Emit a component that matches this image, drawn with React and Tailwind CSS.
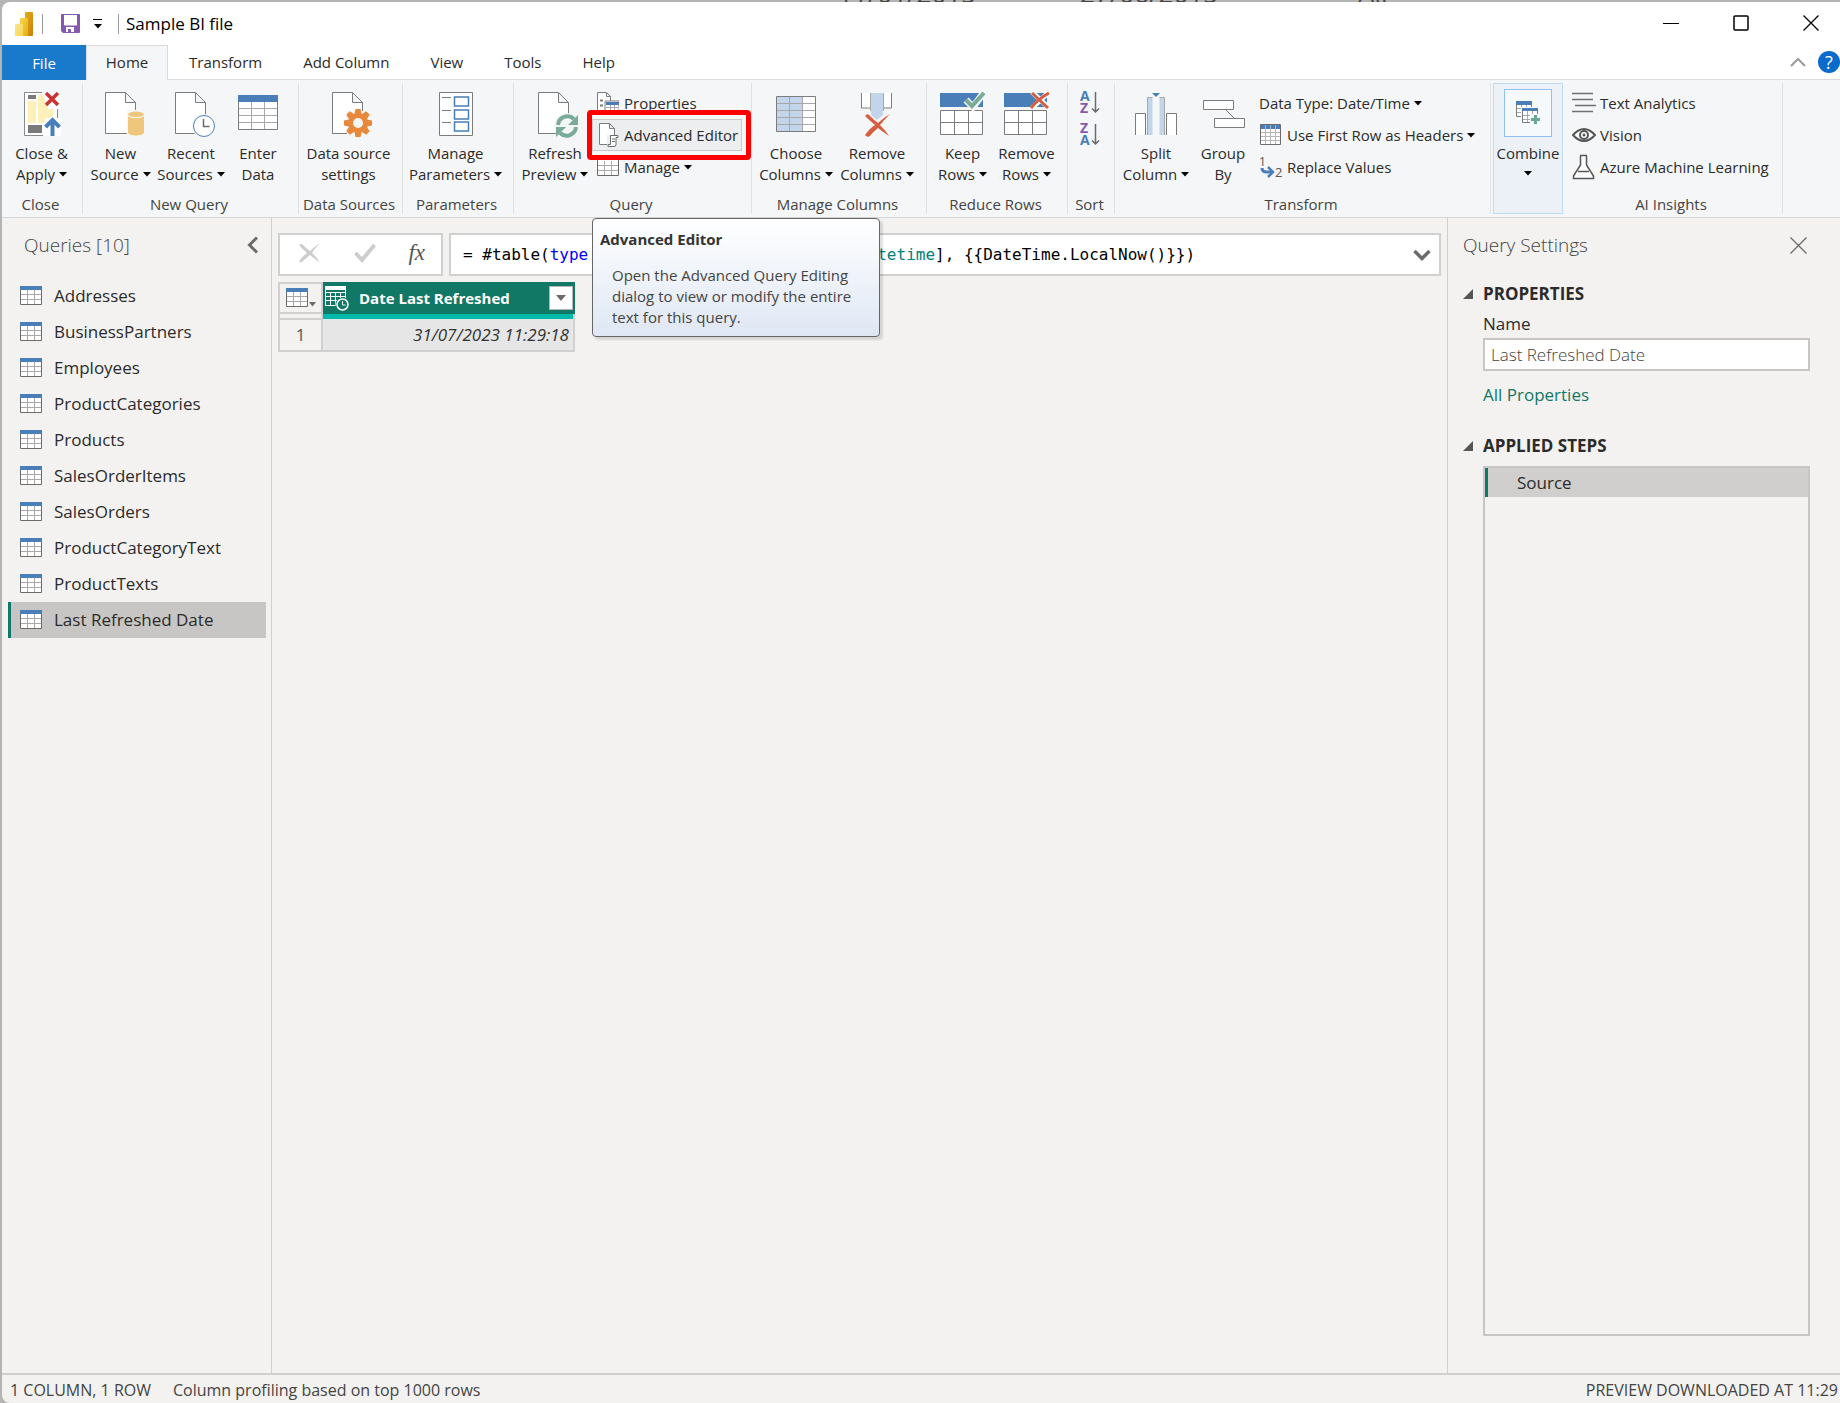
import { useState } from "react";

const queries = [
  "Addresses",
  "BusinessPartners",
  "Employees",
  "ProductCategories",
  "Products",
  "SalesOrderItems",
  "SalesOrders",
  "ProductCategoryText",
  "ProductTexts",
  "Last Refreshed Date",
];

/* ---------- Icons ---------- */

const PowerBiIcon = () => (
  <svg width="18" height="24" viewBox="0 0 18 24">
    <defs>
      <linearGradient id="pbi1" x1="0" y1="0" x2="1" y2="1">
        <stop offset="0" stopColor="#e6ad10" />
        <stop offset="1" stopColor="#c87e0e" />
      </linearGradient>
      <linearGradient id="pbi2" x1="0" y1="0" x2="1" y2="1">
        <stop offset="0" stopColor="#f6d751" />
        <stop offset="1" stopColor="#e6ad10" />
      </linearGradient>
      <linearGradient id="pbi3" x1="0" y1="0" x2="1" y2="1">
        <stop offset="0" stopColor="#f9e589" />
        <stop offset="1" stopColor="#f6d751" />
      </linearGradient>
    </defs>
    <path d="M10 1q0-1 1-1h6q1 0 1 1v22q0 1-1 1h-7z" fill="url(#pbi1)" />
    <path d="M5 7q0-1 1-1h6q1 0 1 1v17H5z" fill="url(#pbi2)" />
    <path d="M0 13q0-1 1-1h6q1 0 1 1v11H1q-1 0-1-1z" fill="url(#pbi3)" />
  </svg>
);

const SaveIcon = () => (
  <svg width="19" height="19" viewBox="0 0 19 19">
    <path d="M1 0h17q1 0 1 1v17q0 1-1 1H2l-2-2V1q0-1 1-1z" fill="#8659ab" />
    <path d="M3 1h13v9.500q0 1-1 1H4q-1 0-1-1z" fill="#fff" />
    <path d="M5 13h8v5H5z" fill="#fff" />
    <path d="M7 15h3v3H7z" fill="#8659ab" />
  </svg>
);

const Caret = ({ className = "" }) => (
  <svg width="8" height="5" viewBox="0 0 8 5" className={`inline-block shrink-0 ${className}`}>
    <path d="M0 0h8L4 4.500z" fill="#000" />
  </svg>
);

const CloseApplyIcon = () => (
  <svg width="38" height="46" viewBox="0 0 38 46">
    <path d="M1.500.5h33v43h-33z" fill="#fff" stroke="#8a8a8a" />
    <path d="M5 3h8v4H5zM5 33h14v8H5z" fill="#7a7a7a" />
    <path d="M5 9h8v22H5zM15 3h7l8 14v8H15z" fill="#fdf0b8" />
    <path d="M15 17h15v5l-7 9h-8z" fill="#fdf0b8" />
    <path d="M19 0h19v17H25zM22 26h16v18H20z" fill="#fff" />
    <path d="M23 1l12 12M35 1L23 13" stroke="#cc3333" strokeWidth="3.500" />
    <path d="M29.500 44V30M22.500 35l7-7 7 7" fill="none" stroke="#4a7ebb" strokeWidth="4" />
  </svg>
);

const Page = () => (
  <path d="M.5.500h20l10 10v31H.500zM20.500.500v10h10" fill="#fff" stroke="#7c7c7c" />
);

const NewSourceIcon = () => (
  <svg width="40" height="46" viewBox="0 0 40 46" className="ml-2">
    <Page />
    <path d="M22 18h18v27H22z" fill="#f5f6f7" />
    <path d="M23 22.500v18c0 4 16 4 16 0v-18z" fill="#eec77d" />
    <ellipse cx="31" cy="22.500" rx="8" ry="3" fill="#eec77d" />
    <path d="M23 23c0 3.500 16 3.500 16 0" fill="none" stroke="#fff" />
  </svg>
);

const RecentSourcesIcon = () => (
  <svg width="40" height="46" viewBox="0 0 40 46" className="ml-2">
    <Page />
    <circle cx="29" cy="34" r="12" fill="#f5f6f7" />
    <circle cx="29" cy="34" r="10.500" fill="#fff" stroke="#4f81bd" />
    <path d="M28.500 27v7.500h6" fill="none" stroke="#6b6b6b" strokeWidth="1.500" />
  </svg>
);

const EnterDataIcon = () => (
  <svg width="40" height="46" viewBox="0 0 40 46">
    <path d="M.5 4.500h39v33H.5z" fill="#fff" stroke="#7c7c7c" />
    <path d="M1 16.500h38M1 23.500h38M1 30.500h38M13.500 10v27M26.500 10v27" stroke="#a8a8a8" />
    <path d="M0 3h40v7H0z" fill="#4a7eb9" />
  </svg>
);

const DataSourceIcon = () => (
  <svg width="40" height="46" viewBox="0 0 40 46" className="ml-[6px]">
    <Page />
    <path d="M14 19h26v26H14z" fill="#f5f6f7" />
    <path d="M.5 39v2.500H15M30.500 10v8" fill="none" stroke="#7c7c7c" />
    <g fill="#e8883a">
      <circle cx="26" cy="31" r="10" />
      <path d="M23.500 17h5l1 5h-7zM23.500 45h5l1-5h-7zM12 28.500v5l5 1v-7zM40 28.500v5l-5 1v-7z" />
      <path d="M14.300 22.800l3.500-3.500 4.200 2.800-5 5zM34.200 19.300l3.500 3.500-2.800 4.200-5-5zM14.300 39.200l3.500 3.500 4.200-2.800-5-5zM34.200 42.700l3.500-3.500-2.800-4.200-5 5z" />
    </g>
    <circle cx="26" cy="31" r="5" fill="#f5f6f7" />
  </svg>
);

const ParametersIcon = () => (
  <svg width="36" height="46" viewBox="0 0 36 46">
    <path d="M1.500.5h33v43h-33z" fill="#fff" stroke="#7c7c7c" />
    <path d="M4 5.500h9M4 18.500h9M4 30.500h9" stroke="#7c7c7c" />
    <path d="M16.500 5h14v9h-14zM16.500 18h14v9h-14zM16.500 30h14v9h-14z" fill="#fff" stroke="#4a7eb9" strokeWidth="1.500" />
  </svg>
);

const RefreshIcon = () => (
  <svg width="42" height="46" viewBox="0 0 42 46" className="ml-2">
    <Page />
    <circle cx="29" cy="34" r="13" fill="#f5f6f7" />
    <path d="M20 33a9.500 9.500 0 0 1 16-6M38 35a9.500 9.500 0 0 1-16 6" fill="none" stroke="#79ab98" strokeWidth="4" />
    <path d="M40 23v10H30zM18 45V35h10z" fill="#79ab98" />
  </svg>
);

const ChooseColumnsIcon = () => (
  <svg width="40" height="46" viewBox="0 0 40 46">
    <path d="M.5 4.500h39v35H.5z" fill="#fff" />
    <path d="M1 5h26v34H1z" fill="#c3d5ea" />
    <path d="M1 11.500h38M1 18.500h38M1 25.500h38M1 32.500h38M13.500 5v34M26.500 5v34" stroke="#a8a8a8" />
    <path d="M.5 4.500h39v35H.5z" fill="none" stroke="#7c7c7c" />
  </svg>
);

const RedCross = () => (
  <path
    d="M0 2Q2-1 4 1Q9 6 13 9Q18 4 25 0Q19 6 15 11Q21 17 24 22Q18 18 13 14Q9 17 5 22Q2 24 0 21Q5 14 10 11Q4 6 0 2z"
    fill="#d75f41"
  />
);

const RemoveColumnsIcon = () => (
  <svg width="34" height="46" viewBox="0 0 34 46">
    <path d="M1.500 1v15h9V1M22.500 1v15h9V1" fill="#fff" stroke="#7c7c7c" />
    <path d="M11 1h12v22l-6 5-6-5z" fill="#c3d5ea" />
    <path d="M10.500 1v18M23.500 1v18" stroke="#a8a8a8" />
    <g transform="translate(5 22)">
      <RedCross />
    </g>
  </svg>
);

const RowsIcon = ({ remove }) => (
  <svg width="46" height="46" viewBox="0 0 46 46">
    <path d="M0 1h43v14H0z" fill="#4a7eb9" />
    <path d="M.5 18.500h42v24H.5zM14.500 18v24M28.500 18v24M0 30.500h43" fill="#fff" stroke="#7c7c7c" />
    {remove ? (
      <g>
        <path d="M28 0l17 16M45 0L28 16" stroke="#fff" strokeWidth="5" />
        <path d="M28 1l16 15M45 1Q34 7 27 16" fill="none" stroke="#d75f41" strokeWidth="3" />
      </g>
    ) : (
      <g>
        <path d="M26 8l7 7L45-1" fill="none" stroke="#f5f6f7" strokeWidth="7" />
        <path d="M26 8l6 6L44 1" fill="none" stroke="#79ab98" strokeWidth="4" />
      </g>
    )}
  </svg>
);

const SplitColumnIcon = () => (
  <svg width="42" height="46" viewBox="0 0 42 46">
    <path d="M.5 43V21.500h10V43M31.500 43V21.500h10V43" fill="#fff" stroke="#7c7c7c" />
    <path d="M12.500 43V5.500h5V43zM24.500 43V5.500h5V43z" fill="#c3d5ea" />
    <path d="M12.500 43V5.500h5M29.500 43V5.500h-5" fill="none" stroke="#a8a8a8" />
    <path d="M17 1h8l-4 4z" fill="#4a7eb9" />
  </svg>
);

const GroupByIcon = () => (
  <svg width="42" height="46" viewBox="0 0 42 46" className="ml-[2px]">
    <path d="M22 17l10 10" stroke="#7c7c7c" />
    <path d="M.5 8.500h30v9H.5zM11.500 26.500h30v9h-30z" fill="#fff" stroke="#7c7c7c" />
  </svg>
);

const CombineIcon = () => (
  <svg width="24" height="24" viewBox="0 0 24 24">
    <path d="M.5 1.500h15v14H.5z" fill="#fff" stroke="#7c7c7c" />
    <path d="M1 7.500h14M1 11.500h14M5.500 4v11M10.500 4v11" stroke="#a8a8a8" />
    <path d="M0 0h16v4H0z" fill="#4a7eb9" />
    <path d="M5 6h18v17H5z" fill="#f6f9fc" />
    <path d="M6.500 8.500h15v13h-15z" fill="#fff" stroke="#7c7c7c" />
    <path d="M7 14.500h14M7 18.500h8M11.500 10v11M16.500 10v6" stroke="#a8a8a8" />
    <path d="M6 7h16v3H6z" fill="#4a7eb9" />
    <path d="M14 13h10v11H14z" fill="#f6f9fc" />
    <path d="M18 14h3v3h3v3h-3v3h-3v-3h-3v-3h3z" fill="#6aa893" />
  </svg>
);

const PropertiesIcon = () => (
  <svg width="22" height="22" viewBox="0 0 22 22">
    <path d="M.5.500h9l4 4v16H.500zM9.500.500v4h4" fill="#fff" stroke="#7c7c7c" />
    <path d="M3 8.500h3M3 13.500h3" stroke="#7c7c7c" strokeWidth="2" />
    <path d="M8 9h14v13H8z" fill="#fff" stroke="#7c7c7c" />
    <path d="M9 15.500h12M13.500 12v8M17.500 12v8" stroke="#a8a8a8" />
    <path d="M9 10h13v3H9z" fill="#4a7eb9" />
  </svg>
);

const AdvancedEditorIcon = () => (
  <svg width="22" height="24" viewBox="0 0 22 24">
    <path d="M2.500.500h10l5 5v16h-15zM12.500.500v5h5" fill="#fff" stroke="#7c7c7c" />
    <path d="M10 12h12v12H10z" fill="#edeeef" />
    <path d="M13.500 12.500h7.500v2h-2v7q0 2-2 2h-6v-2h2.500z" fill="#fff" stroke="#6b6b6b" />
    <path d="M15 16h3M15 18.500h3" stroke="#6b6b6b" />
  </svg>
);

const TableIcon = ({ header }) => (
  <svg width="22" height="20" viewBox="0 0 22 20" className="shrink-0">
    <path d="M.5.500h21v18H.500z" fill="#fff" />
    <path d="M1 8.500h20M1 13.500h20M7.500 4v14M14.500 4v14" stroke="#a8a8a8" />
    <path d="M.5.500h21v18H.500z" fill="none" stroke="#6b6b6b" />
    {header && <path d="M0 0h22v4H0z" fill="#4a7eb9" />}
  </svg>
);

const FirstRowIcon = () => (
  <svg width="22" height="22" viewBox="0 0 22 22">
    <path d="M.5.500h20v20H.500z" fill="#fff" />
    <path d="M1 1h19v4H1z" fill="#4a7eb9" />
    <path d="M1 8.500h20M1 12.500h20M1 16.500h20M5.500 1v20M10.500 1v20M15.500 1v20" stroke="#b5b5b5" />
    <path d="M.5.500h20v20H.500z" fill="none" stroke="#6b6b6b" />
  </svg>
);

const ReplaceIcon = () => (
  <svg width="24" height="22" viewBox="0 0 24 22" overflow="visible">
    <text x="0" y="10" fontSize="12" fill="#555">1</text>
    <text x="16" y="21" fontSize="13" fill="#555">2</text>
    <path d="M3 12q0 4 5 4h4" fill="none" stroke="#4a7eb9" strokeWidth="3" />
    <path d="M9 11l5 5-5 5" fill="none" stroke="#4a7eb9" strokeWidth="2.500" />
  </svg>
);

const SortIcon = ({ first, second, a, b }) => (
  <svg width="20" height="24" viewBox="0 0 20 24" overflow="visible">
    <text x="0" y="10" fontSize="14" fontWeight="700" fill={a}>{first}</text>
    <text x="0" y="22" fontSize="14" fontWeight="700" fill={b}>{second}</text>
    <path d="M15.500 1v20M12 17.500l3.500 3.500 3.500-3.500" fill="none" stroke="#6b6b6b" strokeWidth="1.500" />
  </svg>
);

const TextAnalyticsIcon = () => (
  <svg width="24" height="22" viewBox="0 0 24 22">
    <path d="M0 1.500h21M0 7.500h21M3 13.500h21M0 19.500h21" stroke="#6f6f6f" strokeWidth="1.500" />
  </svg>
);

const VisionIcon = () => (
  <svg width="24" height="14" viewBox="0 0 24 14">
    <path d="M1 7Q12-5 23 7Q12 19 1 7z" fill="#fff" stroke="#555" strokeWidth="2" />
    <circle cx="12" cy="7" r="4" fill="#fff" stroke="#555" strokeWidth="2" />
    <circle cx="12" cy="7" r="1.500" fill="#555" />
  </svg>
);

const FlaskIcon = () => (
  <svg width="24" height="26" viewBox="0 0 24 26">
    <path d="M8 1.500h7M8.500 2v9L1.500 22v2.500h20V22l-7-11V2" fill="#fff" stroke="#555" strokeWidth="1.500" />
    <path d="M6 17.500h11" stroke="#555" strokeWidth="1.500" />
  </svg>
);

const DateTimeColumnIcon = () => (
  <svg width="24" height="25" viewBox="0 0 24 25" fill="none" stroke="#fff">
    <path d="M.5 1.500h20v18H.500zM.5 6.500h20M.5 10.500h20M.5 14.500h20M5.500 6v13M10.500 6v13M15.500 6v13" />
    <path d="M0 0h21v4H0z" fill="#fff" stroke="none" />
    <circle cx="17.500" cy="18.500" r="7" fill="#117865" stroke="none" />
    <circle cx="17.500" cy="18.500" r="5.500" strokeWidth="1.500" />
    <path d="M17.500 15v4h3" />
  </svg>
);

/* ---------- Ribbon parts ---------- */

const Group = ({ label, className, children }) => (
  <div className={`flex flex-col shrink-0 border-r border-[#dfe1e3] ${className}`}>
    <div className="flex h-[111px]">{children}</div>
    <div className="pr-[3px] text-center text-[15px] leading-5 text-[#444] whitespace-nowrap">{label}</div>
  </div>
);

const BigButton = ({ icon, line1, line2, caret, className }) => (
  <button className={`flex flex-col items-center shrink-0 pt-[9px] ${className}`}>
    <span className="flex h-[51px] items-start justify-center">{icon}</span>
    <span className="text-[15px] leading-[21px] whitespace-nowrap">{line1}</span>
    <span className="flex items-center gap-1 text-[15px] leading-[21px] whitespace-nowrap">
      {line2}
      {caret && <Caret />}
    </span>
  </button>
);

const SmallButton = ({ icon, label, caret, className = "" }) => (
  <button className={`flex h-8 items-center gap-1 text-[15px] leading-5 whitespace-nowrap ${className}`}>
    {icon && <span className="flex w-6 justify-center shrink-0">{icon}</span>}
    {label}
    {caret && <Caret />}
  </button>
);

/* Sliver of the report window that shows above this one */
const BackgroundWindow = () => (
  <div className="flex h-[2px] shrink-0 items-end overflow-hidden pl-[836px] text-[26px] leading-7 text-[#444]" aria-hidden="true">
    <span className="-mb-[5px] w-[242px] shrink-0">11/01/2015</span>
    <span className="-mb-[5px] w-[278px] shrink-0">27/06/2015</span>
    <span className="-mb-[5px]">All</span>
  </div>
);

const TitleBar = () => (
  <header className="flex h-[43px] items-center bg-white pl-[13px] pr-[21px] rounded-tl-lg">
    <PowerBiIcon />
    <div className="ml-[9px] h-5 w-px bg-[#9a9a9a]"></div>
    <button className="ml-[18px]" aria-label="Save">
      <SaveIcon />
    </button>
    <button className="ml-[13px] flex flex-col items-center gap-1" aria-label="Customize quick access toolbar">
      <span className="h-px w-[9px] bg-black"></span>
      <Caret />
    </button>
    <div className="ml-4 h-5 w-px bg-[#9a9a9a]"></div>
    <h1 className="ml-[7px] text-[17px] leading-6 text-black">Sample BI file</h1>
    <div className="ml-auto flex items-center gap-[54px] pb-[2px]">
      <button aria-label="Minimize">
        <svg width="16" height="16" viewBox="0 0 16 16"><path d="M0 8.500h16" stroke="#000" /></svg>
      </button>
      <button aria-label="Maximize">
        <svg width="16" height="16" viewBox="0 0 16 16"><rect x="1" y="1" width="14" height="14" rx="1" fill="none" stroke="#000" strokeWidth="1.500" /></svg>
      </button>
      <button aria-label="Close">
        <svg width="16" height="16" viewBox="0 0 16 16"><path d="M.5.500l15 15M15.500.500l-15 15" stroke="#000" strokeWidth="1.300" /></svg>
      </button>
    </div>
  </header>
);

const Tabs = () => (
  <nav className="flex h-[35px] bg-white text-[15px] leading-5">
    <button className="w-[84px] bg-[#1979ca] text-white">File</button>
    <button className="w-[82px] border border-b-0 border-[#dadbdc] bg-[#f5f6f7] pb-[2px]">Home</button>
    <div className="flex flex-1 items-center gap-[41px] border-b border-[#dadbdc] pl-[21px]">
      <button>Transform</button>
      <button>Add Column</button>
      <button>View</button>
      <button>Tools</button>
      <button>Help</button>
      <div className="ml-auto flex items-center gap-3">
        <button aria-label="Collapse ribbon">
          <svg width="16" height="10" viewBox="0 0 16 10"><path d="M1 9l7-7 7 7" fill="none" stroke="#9a9a9a" strokeWidth="2" /></svg>
        </button>
        <button className="h-[22px] w-[22px] rounded-full bg-[#0a6bcb] text-[18px] leading-[22px] text-white" aria-label="Help center">
          ?
        </button>
      </div>
    </div>
  </nav>
);

const Tooltip = () => (
  <div
    role="tooltip"
    className="absolute left-0 top-[135px] z-20 w-[288px] rounded-sm border border-[#666] bg-linear-to-b from-white to-[#dfe7f4] px-[7px] pt-[10px] pb-2 text-left shadow-[3px_3px_2px_rgba(0,0,0,0.12)]"
  >
    <p className="text-[15px] font-bold leading-5 text-[#333]">Advanced Editor</p>
    <p className="mt-4 pl-3 text-[15px] leading-[21px] text-[#444] whitespace-nowrap">
      Open the Advanced Query Editing
      <br />
      dialog to view or modify the entire
      <br />
      text for this query.
    </p>
  </div>
);

const Ribbon = () => (
  <div className="flex h-[138px] border-b border-[#d5d6d7] bg-[#f5f6f7] pt-[3px] pb-[3px]">
    <Group label="Close" className="w-[81px]">
      <BigButton icon={<CloseApplyIcon />} line1="Close &" line2="Apply" caret className="w-[79px]" />
    </Group>
    <Group label="New Query" className="w-[216px]">
      <BigButton icon={<NewSourceIcon />} line1="New" line2="Source" caret className="w-[75px]" />
      <BigButton icon={<RecentSourcesIcon />} line1="Recent" line2="Sources" caret className="w-[66px]" />
      <BigButton icon={<EnterDataIcon />} line1="Enter" line2="Data" className="w-[68px]" />
    </Group>
    <Group label="Data Sources" className="w-[104px]">
      <BigButton icon={<DataSourceIcon />} line1="Data source" line2="settings" className="w-[99px]" />
    </Group>
    <Group label="Parameters" className="w-[111px]">
      <BigButton icon={<ParametersIcon />} line1="Manage" line2="Parameters" caret className="w-[105px]" />
    </Group>
    <Group label="Query" className="w-[238px]">
      <BigButton icon={<RefreshIcon />} line1="Refresh" line2="Preview" caret className="w-[78px] pl-1" />
      <div className="relative flex flex-col pt-1">
        <SmallButton icon={<PropertiesIcon />} label="Properties" className="pl-1" />
        <SmallButton
          icon={<AdvancedEditorIcon />}
          label="Advanced Editor"
          className="w-[150px] border border-[#c8c9ca] bg-[#edeeef] pl-[3px]"
        />
        <SmallButton icon={<TableIcon />} label="Manage" caret className="pl-1" />
        {/* highlight box around the active command */}
        <div className="pointer-events-none absolute -left-[5px] top-[27px] z-10 h-[50px] w-[164px] rounded-sm border-[5px] border-[#ff0000]"></div>
        <Tooltip />
      </div>
    </Group>
    <Group label="Manage Columns" className="w-[175px]">
      <BigButton icon={<ChooseColumnsIcon />} line1="Choose" line2="Columns" caret className="w-[88px]" />
      <BigButton icon={<RemoveColumnsIcon />} line1="Remove" line2="Columns" caret className="w-[74px]" />
    </Group>
    <Group label="Reduce Rows" className="w-[141px]">
      <BigButton icon={<RowsIcon />} line1="Keep" line2="Rows" caret className="w-[71px]" />
      <BigButton icon={<RowsIcon remove />} line1="Remove" line2="Rows" caret className="w-[57px]" />
    </Group>
    <Group label="Sort" className="w-[47px]">
      <div className="flex flex-col gap-2 pl-3 pt-2">
        <button aria-label="Sort ascending">
          <SortIcon first="A" second="Z" a="#4a7eb9" b="#8659ab" />
        </button>
        <button aria-label="Sort descending">
          <SortIcon first="Z" second="A" a="#8659ab" b="#4a7eb9" />
        </button>
      </div>
    </Group>
    <Group label="Transform" className="w-[376px]">
      <BigButton icon={<SplitColumnIcon />} line1="Split" line2="Column" caret className="w-[82px]" />
      <BigButton icon={<GroupByIcon />} line1="Group" line2="By" className="w-[52px]" />
      <div className="flex flex-col pl-[10px] pt-1">
        <SmallButton label="Data Type: Date/Time" caret />
        <SmallButton icon={<FirstRowIcon />} label="Use First Row as Headers" caret />
        <SmallButton icon={<ReplaceIcon />} label="Replace Values" />
      </div>
    </Group>
    <button className="ml-[2px] flex w-[70px] shrink-0 flex-col items-center border border-[#c0dcf3] bg-[#ebf1f6] pt-[5px] text-[15px] leading-[21px]">
      <span className="mb-[6px] flex h-12 w-12 items-center justify-center border border-[#92c0ee] bg-[#f6f9fc]">
        <CombineIcon />
      </span>
      Combine
      <Caret className="mt-[7px]" />
    </button>
    <Group label="AI Insights" className="w-[220px]">
      <div className="flex flex-col pl-[9px] pt-1">
        <SmallButton icon={<TextAnalyticsIcon />} label="Text Analytics" />
        <SmallButton icon={<VisionIcon />} label="Vision" />
        <SmallButton icon={<FlaskIcon />} label="Azure Machine Learning" />
      </div>
    </Group>
  </div>
);

/* ---------- Panels ---------- */

const QueriesPanel = ({ selected, onSelect }) => (
  <aside className="w-[270px] shrink-0 border-r border-[#cfcfcf]">
    <div className="flex items-center justify-between pl-[22px] pr-3 pt-[15px]">
      <h2 className="text-[19px] font-light leading-6 text-[#444]">Queries [10]</h2>
      <button aria-label="Collapse queries">
        <svg width="13" height="18" viewBox="0 0 13 18"><path d="M11 1.500L3.500 9l7.500 7.500" fill="none" stroke="#6b6b6b" strokeWidth="3" /></svg>
      </button>
    </div>
    <ul className="mt-[21px] pl-[6px] pr-[5px]">
      {queries.map((name) => (
        <li key={name}>
          <button
            onClick={() => onSelect(name)}
            className={`flex h-9 w-full items-center gap-3 border-l-[3px] pl-[9px] text-left text-[17px] leading-6 ${
              name === selected ? "border-[#117865] bg-[#c8c6c4]" : "border-transparent"
            }`}
          >
            <TableIcon header />
            {name}
          </button>
        </li>
      ))}
    </ul>
  </aside>
);

const FormulaBar = () => (
  <div className="flex h-[43px] gap-[6px]">
    <div className="flex w-[165px] shrink-0 items-center justify-between border-2 border-[#d0d0ce] bg-white pb-1 pl-[18px] pr-4">
      <button aria-label="Cancel">
        <svg width="23" height="20" viewBox="0 0 23 20"><path d="M1 2Q3 0 5 2Q9 6 12 8Q16 4 22 0Q17 5 14 10Q19 14 22 20Q17 16 12 12Q8 15 4 19Q2 20 1 18Q5 13 9 10Q4 6 1 2z" fill="#cdcdcd" /></svg>
      </button>
      <button aria-label="Apply">
        <svg width="22" height="20" viewBox="0 0 22 20"><path d="M1.500 10l6.500 7L20.500 2" fill="none" stroke="#cdcdcd" strokeWidth="4" /></svg>
      </button>
      <button className="font-['Liberation_Serif',serif] text-[23px] italic leading-7 text-[#555]" aria-label="Insert step">
        fx
      </button>
    </div>
    <div className="flex flex-1 items-center border-2 border-[#d0d0ce] bg-white pl-3 pr-2">
      <code className="flex-1 whitespace-pre font-['DejaVu_Sans_Mono',monospace] text-[16px] leading-6 text-black">
        = #table(<span className="text-[#0000ff]">type</span> <span className="text-[#008080]">table</span> [Date Last Refreshed=
        <span className="text-[#008080]">datetime</span>], {"{{DateTime.LocalNow()}}"})
      </code>
      <button aria-label="Expand formula bar">
        <svg width="18" height="12" viewBox="0 0 18 12"><path d="M1.500 2L9 9.500 16.500 2" fill="none" stroke="#6b6b6b" strokeWidth="3.500" /></svg>
      </button>
    </div>
  </div>
);

const DataGrid = () => (
  <table className="mt-[6px] w-[297px] border-collapse border-2 border-[#d0d0ce]">
    <thead>
      <tr>
        <th className="w-[43px] border-2 border-[#d0d0ce] p-0">
          <button className="flex w-full items-center justify-center gap-px" aria-label="Table options">
            <TableIcon header />
            <svg width="7" height="5" viewBox="0 0 7 5" className="mt-3"><path d="M0 0h7L3.500 4.500z" fill="#6b6b6b" /></svg>
          </button>
        </th>
        <th className="border-2 border-[#117865] bg-[#117865] p-0">
          <div className="flex h-7 items-center pl-[2px]">
            <DateTimeColumnIcon />
            <span className="ml-[10px] text-[15px] font-bold leading-5 text-white">Date Last Refreshed</span>
            <button className="ml-auto flex h-6 w-6 items-center justify-center border border-[#b5b5b5] bg-white" aria-label="Filter column">
              <svg width="10" height="6" viewBox="0 0 10 6"><path d="M0 0h10L5 6z" fill="#6b6b6b" /></svg>
            </button>
          </div>
        </th>
      </tr>
      <tr className="h-[6px]">
        <td className="border-2 border-[#d0d0ce] p-0"></td>
        <td className="bg-[#01b8aa] p-0"></td>
      </tr>
    </thead>
    <tbody>
      <tr className="h-8">
        <td className="border-2 border-[#d0d0ce] p-0 text-center text-[17px] leading-6 text-[#555]">1</td>
        <td className="bg-[#e6e6e6] p-0 pr-1 text-right text-[17px] italic leading-6 text-[#333]">31/07/2023 11:29:18</td>
      </tr>
    </tbody>
  </table>
);

const SectionTitle = ({ children }) => (
  <h3 className="flex items-center gap-[10px] text-[17px] font-bold leading-6 text-[#2b2b2b]">
    <svg width="10" height="10" viewBox="0 0 10 10"><path d="M10 0v10H0z" fill="#555" /></svg>
    {children}
  </h3>
);

const SettingsPanel = () => (
  <aside className="flex w-[393px] shrink-0 flex-col border-l border-[#cfcfcf] pl-[15px] pr-[30px] pt-[15px] pb-[37px]">
    <div className="flex items-center justify-between pr-[3px]">
      <h2 className="text-[19px] font-light leading-6 text-[#444]">Query Settings</h2>
      <button aria-label="Close settings">
        <svg width="17" height="17" viewBox="0 0 17 17"><path d="M.5.500l16 16M16.500.500l-16 16" stroke="#6b6b6b" strokeWidth="1.300" /></svg>
      </button>
    </div>
    <div className="mt-[25px]">
      <SectionTitle>PROPERTIES</SectionTitle>
    </div>
    <div className="mt-[6px] flex flex-col items-start pl-5 text-[17px] leading-6">
      <label htmlFor="query-name">Name</label>
      <input
        id="query-name"
        defaultValue="Last Refreshed Date"
        className="mt-[2px] h-[33px] w-full border-2 border-[#c8c6c4] bg-white px-[6px] font-light text-[#444]"
      />
      <a href="#all-properties" className="mt-3 text-[#117865]">All Properties</a>
    </div>
    <div className="mt-[27px]">
      <SectionTitle>APPLIED STEPS</SectionTitle>
    </div>
    <ul className="ml-5 mt-2 flex-1 border-2 border-[#c8c6c4]">
      <li>
        <button className="flex h-[29px] w-full items-center border-l-[3px] border-[#117865] bg-[#d0cfcd] pl-[29px] text-[17px] leading-6">
          Source
        </button>
      </li>
    </ul>
  </aside>
);

const App = () => {
  const [selected, setSelected] = useState("Last Refreshed Date");

  return (
    <div className="flex h-screen flex-col overflow-hidden bg-[#b4b4b4] pl-[2px] font-['Open_Sans','Noto_Sans',sans-serif] text-[#2b2b2b]">
      <BackgroundWindow />
      <TitleBar />
      <Tabs />
      <Ribbon />
      <div className="flex min-h-0 flex-1 bg-[#f3f2f1]">
        <QueriesPanel selected={selected} onSelect={setSelected} />
        <main className="min-w-0 flex-1 pl-[6px] pr-[6px] pt-[15px]">
          <FormulaBar />
          <DataGrid />
        </main>
        <SettingsPanel />
      </div>
      <footer className="flex h-[30px] shrink-0 items-center rounded-bl-lg border-t-2 border-[#cfcfcf] bg-[#f3f2f1] pl-2 pr-[2px] pt-[2px] text-[16px] leading-6 text-[#444]">
        <span>1 COLUMN, 1 ROW</span>
        <span className="ml-[22px]">Column profiling based on top 1000 rows</span>
        <span className="ml-auto">PREVIEW DOWNLOADED AT 11:29</span>
      </footer>
    </div>
  );
};

export default App;
